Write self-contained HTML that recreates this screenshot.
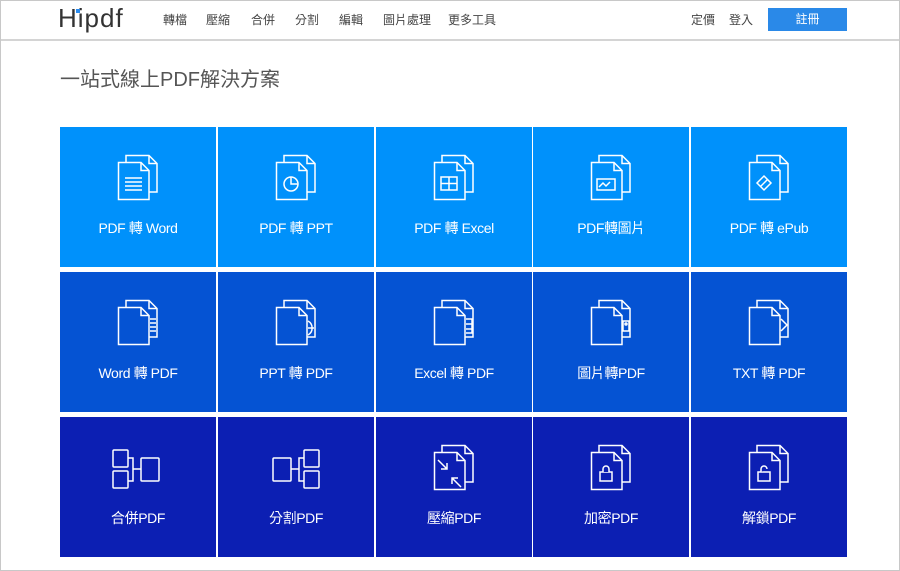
<!DOCTYPE html>
<html><head><meta charset="utf-8"><style>
*{margin:0;padding:0;box-sizing:border-box}
body{width:900px;height:571px;background:#fff;font-family:"Liberation Sans","Noto Sans CJK TC",sans-serif;position:relative;overflow:hidden}
.frame{position:absolute;left:0;top:0;width:900px;height:571px;border:1px solid #c8c8c8;pointer-events:none}
.hdr{position:absolute;left:0;top:0;width:900px;height:41px;border-bottom:2px solid #d4d4d4}
.logo{position:absolute;left:58px;top:3px;font-size:26px;color:#333;letter-spacing:1px}
.logo i{position:absolute;left:18px;top:6px;width:4px;height:4px;background:#2a8cf0}
.nav{position:absolute;top:11px;font-size:12px;color:#444}
.btn{position:absolute;left:768px;top:8px;width:79px;height:23px;background:#2a89e8;color:#fff;font-size:12px;text-align:center;line-height:23px}
h1{position:absolute;left:60px;top:63px;font-size:20px;font-weight:normal;color:#555}
.c{position:absolute;width:156px;height:140px;color:#fff;text-align:center}
.c svg{position:absolute;left:57px;top:27px}
.c span{position:absolute;left:0;right:0;top:91px;font-size:14px;letter-spacing:-0.4px}
</style></head><body>
<div class="hdr">
<div class="logo">Hipdf<i></i></div>
<div class="nav" style="left:163px">轉檔</div>
<div class="nav" style="left:206px">壓縮</div>
<div class="nav" style="left:251px">合併</div>
<div class="nav" style="left:295px">分割</div>
<div class="nav" style="left:339px">編輯</div>
<div class="nav" style="left:383px">圖片處理</div>
<div class="nav" style="left:448px">更多工具</div>
<div class="nav" style="left:691px">定價</div>
<div class="nav" style="left:729px">登入</div>
<div class="btn">註冊</div>
</div>
<h1>一站式線上PDF解決方案</h1>
<div id="g"></div>
<div class="frame"></div>
<script>
var xs=[60,218,376,533,691],ys=[127,272,417],cols=['#0091fb','#0553d3','#0c1fb3'];
var labels=[['PDF 轉 Word','PDF 轉 PPT','PDF 轉 Excel','PDF轉圖片','PDF 轉 ePub'],['Word 轉 PDF','PPT 轉 PDF','Excel 轉 PDF','圖片轉PDF','TXT 轉 PDF'],['合併PDF','分割PDF','壓縮PDF','加密PDF','解鎖PDF']];
function docs(f,inner){return '<svg width="42" height="47" viewBox="0 0 42 47" fill="'+f+'" stroke="#fff" stroke-width="1.5"><path d="M9 1.5H32L40 9.5V38H9Z"/><path d="M32 1.5V9.5H40" fill="none"/><path d="M1.5 8.5H24L32 16.5V45.5H1.5Z"/><path d="M24 8.5V16.5H32" fill="none"/>'+inner+'</svg>';}
var inn=[
['<path d="M8 24H25M8 28H25M8 32H25M8 36H25"/>','<circle cx="16" cy="30" r="7" fill="none"/><path d="M16 23V30H23"/>','<rect x="8" y="23" width="16" height="13" fill="none"/><path d="M16 23V36M8 29.5H24"/>','<rect x="7" y="25" width="18" height="11" fill="none"/><path d="M9 33L13 29L16 32L20 28"/>','<path d="M16 22L23 29L16 36L9 29Z" fill="none"/><path d="M12.5 32.5L19.5 25.5"/>'],
['<path d="M33 20H39M33 24H39M33 28H39M33 32H39"/>','<path d="M33 22A8 8 0 0 1 33 36M33 29H39"/>','<path d="M33 20H39V34H33M33 25H39M33 30H39"/>','<rect x="33" y="22" width="6" height="10" fill="none"/><circle cx="36" cy="25" r="1"/>','<path d="M33 20L39 26L33 32"/>'],
];
var h='';
for(var r=0;r<3;r++)for(var c=0;c<5;c++){
var f=cols[r],svg;
if(r<2)svg=docs(f,inn[r][c]);
else if(c==0)svg='<svg width="48" height="42" viewBox="0 0 48 42" fill="none" stroke="#fff" stroke-width="1.5" style="left:52px;top:32px"><rect x="1" y="1" width="15" height="17" rx="1"/><rect x="1" y="22" width="15" height="17" rx="1"/><rect x="29" y="9" width="18" height="23" rx="1"/><path d="M16 9H21V32H16M21 20H29"/></svg>';
else if(c==1)svg='<svg width="48" height="42" viewBox="0 0 48 42" fill="none" stroke="#fff" stroke-width="1.5" style="left:54px;top:32px"><rect x="1" y="9" width="18" height="23" rx="1"/><rect x="32" y="1" width="15" height="17" rx="1"/><rect x="32" y="22" width="15" height="17" rx="1"/><path d="M32 9H27V32H32M19 20H27"/></svg>';
else if(c==2)svg=docs(f,'<path d="M5 16L14 25M14 19V25H8M28 43L19 34M19 40V34H25"/>');
else svg=docs(f,'<rect x="10" y="28" width="12" height="9" fill="none"/><path d="M13 28V25A3 3 0 0 1 19 25'+(c==3?'V28':'')+'"/>');
h+='<div class="c" style="left:'+xs[c]+'px;top:'+ys[r]+'px;background:'+f+'">'+svg+'<span>'+labels[r][c]+'</span></div>';
}
document.getElementById('g').innerHTML=h;
</script>
</body></html>
